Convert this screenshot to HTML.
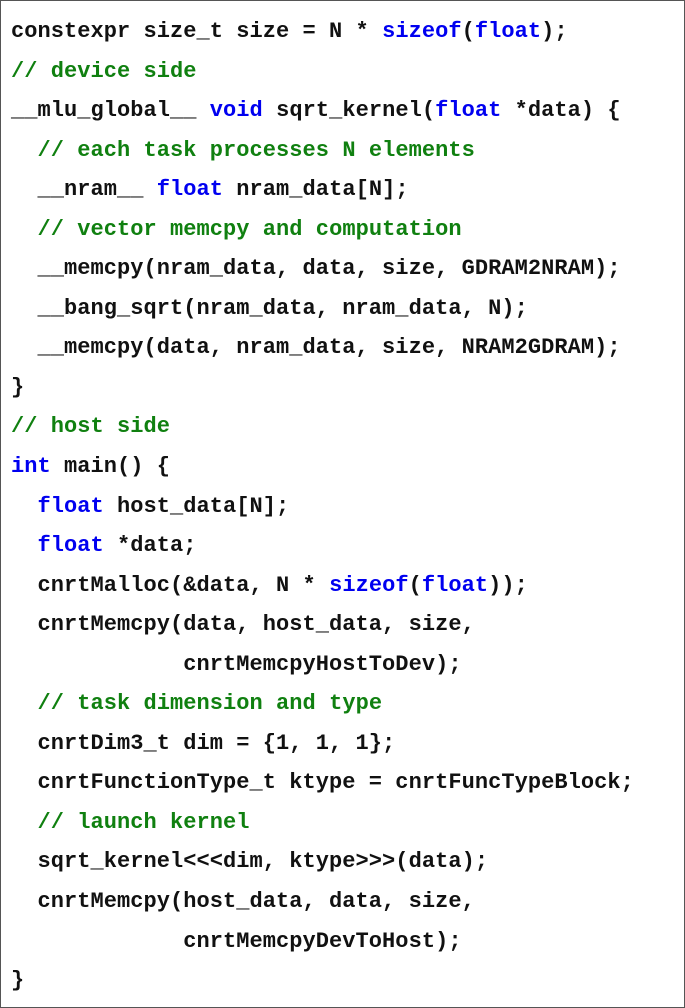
<!DOCTYPE html>
<html><head><style>
html,body{margin:0;padding:0;background:#fff;}
.box{position:absolute;left:0;top:0;width:683px;height:1006px;border:1px solid #555;}
pre{position:absolute;left:11px;top:12px;margin:0;font-family:"Liberation Mono",monospace;font-weight:bold;font-size:22px;line-height:39.55px;color:#111;letter-spacing:0.05px;}
.k{color:#0000f0;}
.c{color:#108010;}
</style></head><body><div class="box"></div>
<pre>constexpr size_t size = N * <span class="k">sizeof</span>(<span class="k">float</span>);
<span class="c">// device side</span>
__mlu_global__ <span class="k">void</span> sqrt_kernel(<span class="k">float</span> *data) {
  <span class="c">// each task processes N elements</span>
  __nram__ <span class="k">float</span> nram_data[N];
  <span class="c">// vector memcpy and computation</span>
  __memcpy(nram_data, data, size, GDRAM2NRAM);
  __bang_sqrt(nram_data, nram_data, N);
  __memcpy(data, nram_data, size, NRAM2GDRAM);
}
<span class="c">// host side</span>
<span class="k">int</span> main() {
  <span class="k">float</span> host_data[N];
  <span class="k">float</span> *data;
  cnrtMalloc(&amp;data, N * <span class="k">sizeof</span>(<span class="k">float</span>));
  cnrtMemcpy(data, host_data, size,
             cnrtMemcpyHostToDev);
  <span class="c">// task dimension and type</span>
  cnrtDim3_t dim = {1, 1, 1};
  cnrtFunctionType_t ktype = cnrtFuncTypeBlock;
  <span class="c">// launch kernel</span>
  sqrt_kernel&lt;&lt;&lt;dim, ktype&gt;&gt;&gt;(data);
  cnrtMemcpy(host_data, data, size,
             cnrtMemcpyDevToHost);
}</pre>
</body></html>
